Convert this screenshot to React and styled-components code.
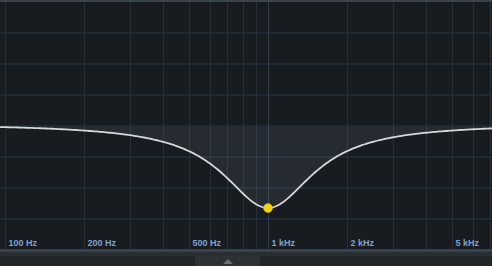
import React from 'react'
import styled, { createGlobalStyle } from 'styled-components'

const GlobalStyle = createGlobalStyle`
  html, body {
    margin: 0;
    padding: 0;
    background: #222528;
  }
  body {
    font-family: "Liberation Sans", Arial, sans-serif;
  }
`

const WIDTH = 492
const HEIGHT = 249
const ZERO_Y = 127
const DEPTH = 81
const CENTER_X = 268
const WIDTH_PX = 55

const freqX = f => 5 + 263 * Math.log10(f / 100)

const gridFreqs = [
  100, 200, 300, 400, 500, 600, 700, 800, 900,
  1000, 2000, 3000, 4000, 5000, 6000, 7000
]
const labels = [
  { f: 100, text: '100 Hz' },
  { f: 200, text: '200 Hz' },
  { f: 500, text: '500 Hz' },
  { f: 1000, text: '1 kHz' },
  { f: 2000, text: '2 kHz' },
  { f: 5000, text: '5 kHz' }
]
const rows = [32, 63, 94, 125, 156, 187, 218]

const curveY = x => {
  const d = (x - CENTER_X) / WIDTH_PX
  const l = 1 / (1 + d * d)
  return ZERO_Y + DEPTH * Math.max(0, (l - 0.04) / 0.96)
}

const buildCurve = () => {
  const pts = []
  for (let x = 0; x <= WIDTH; x += 2) pts.push(`${x},${curveY(x).toFixed(2)}`)
  return pts
}

const Graph = () => {
  const pts = buildCurve()
  const line = 'M' + pts.join(' L')
  const area = `M0,${ZERO_Y} L${pts.join(' L')} L${WIDTH},${ZERO_Y} Z`
  return (
    <GraphSvg width={WIDTH} height={HEIGHT} viewBox={`0 0 ${WIDTH} ${HEIGHT}`}>
      {rows.map(y => (
        <rect key={y} x="0" y={y} width={WIDTH} height="2" fill="#1e2a36" />
      ))}
      {gridFreqs.map(f => {
        const x = Math.round(freqX(f)) + 0.5
        return (
          <line
            key={f}
            x1={x}
            x2={x}
            y1="0"
            y2={HEIGHT}
            stroke={f === 1000 ? '#2e3d4b' : '#272f37'}
            strokeWidth="1"
          />
        )
      })}
      <path d={area} fill="rgba(190, 205, 220, 0.09)" />
      <path d={line} fill="none" stroke="#d4d8dc" strokeWidth="1.8" />
      <circle cx={CENTER_X} cy={ZERO_Y + DEPTH} r="4.5" fill="#f7d417" stroke="#c9a600" strokeWidth="0.6" />
      {labels.map(l => (
        <FreqLabel key={l.text} x={Math.round(freqX(l.f)) + 3.5} y="246">
          {l.text}
        </FreqLabel>
      ))}
    </GraphSvg>
  )
}

const App = () => (
  <>
    <GlobalStyle />
    <Panel>
      <Graph />
      <ScrollStrip />
      <Footer>
        <FooterBand />
        <Track>
          <Tab>
            <Arrow />
          </Tab>
        </Track>
      </Footer>
    </Panel>
  </>
)

export default App

const Panel = styled.div`
  display: flex;
  flex-direction: column;
  width: 492px;
  height: 266px;
  background: #181c20;
  border-top: 2px solid #3a444e;
  box-sizing: border-box;
  overflow: hidden;
`
const GraphSvg = styled.svg`
  display: block;
  flex: none;
  margin-top: -2px;
  background: #181c20;
`
const FreqLabel = styled.text`
  font-family: "Liberation Sans", Arial, sans-serif;
  font-size: 9px;
  font-weight: 700;
  fill: #7ca2d0;
`
const ScrollStrip = styled.div`
  height: 3px;
  flex: none;
  background: #34434f;
`
const Footer = styled.div`
  flex: 1;
  display: flex;
  flex-direction: column;
`
const FooterBand = styled.div`
  height: 4px;
  flex: none;
  background: #2b2e31;
`
const Track = styled.div`
  flex: 1;
  display: flex;
  background: #222528;
  padding-left: 195px;
`
const Tab = styled.div`
  width: 65px;
  background: #2e3134;
  display: flex;
  justify-content: center;
  align-items: flex-start;
  padding-top: 3px;
  box-sizing: border-box;
`
const Arrow = styled.div`
  width: 0;
  height: 0;
  border-left: 5px solid transparent;
  border-right: 5px solid transparent;
  border-bottom: 5px solid #6a6e72;
`
